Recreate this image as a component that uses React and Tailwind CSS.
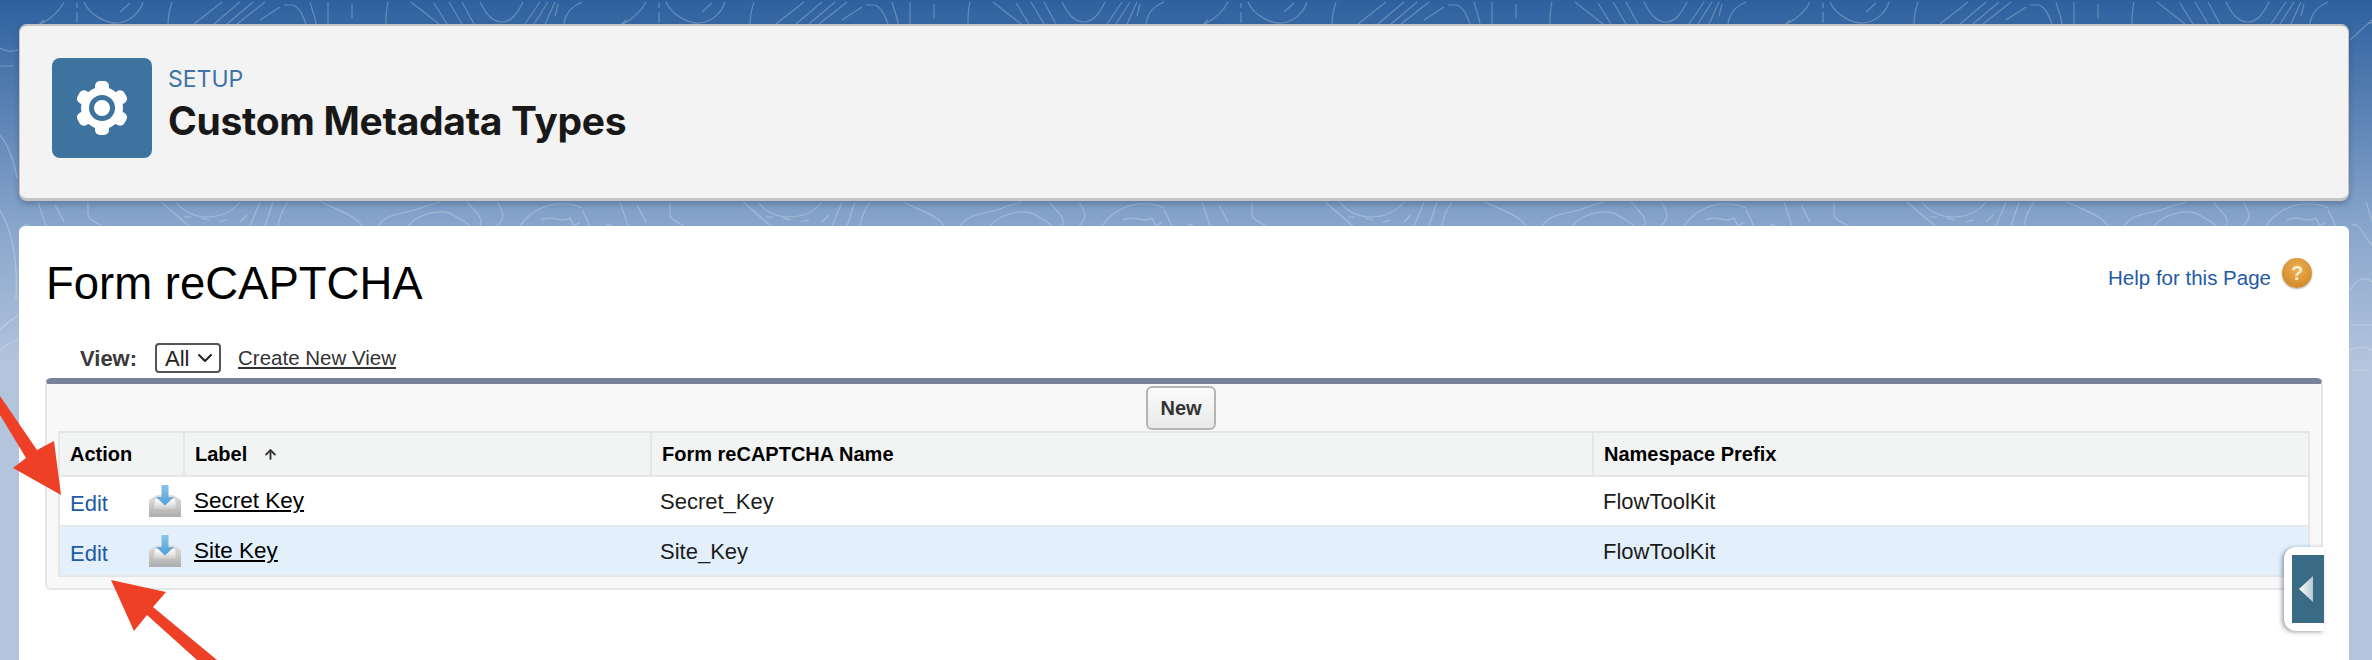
import { ArrowUp, ChevronDown } from 'lucide-react'

const rows = [
  { label: 'Secret Key', name: 'Secret_Key', prefix: 'FlowToolKit', bg: 'bg-white' },
  { label: 'Site Key', name: 'Site_Key', prefix: 'FlowToolKit', bg: 'bg-[#e3f0fc]' },
]

function ContourBackground() {
  return (
    <svg className="absolute inset-0" width="2372" height="660" aria-hidden="true">
      <defs>
        <pattern id="contours" width="582" height="660" patternUnits="userSpaceOnUse">
          <g fill="none" stroke="#ffffff" strokeOpacity="0.25" strokeWidth="1.2">
            {/* top band */}
            <path d="M41 24C52 18 60 10 64 2M77 3V8M77 12V23M84 2C90 16 108 24 118 23C130 22 140 12 143 2M120 12L130 3M168 24C168 14 170 8 172 2" />
            <path d="M194 24L222 2M214 24L240 2M227 24L253 2M237 24L265 2M260 20L280 7M284 5H293M293 5C300 8 303 16 306 24" />
            <path d="M310 2C312 10 315 16 316 24M328 2V24M352 4V18M388 2C386 10 386 16 386 24M411 2L439 24M434 3L447 24M449 2L462 24M462 2L474 24" />
            <path d="M480 2C486 14 492 22 502 22C512 22 518 12 523 2M525 24L540 2M534 24L548 2M545 24L555 2M555 16L558 4M564 24C565 14 572 6 582 2" />
            {/* band under the header */}
            <path d="M38 202L46 226M55 205L64 222M88 202V214C88 220 96 222 102 226M161 202L189 226M176 202C190 222 224 222 240 202" />
            <path d="M184 217H191M201 218L209 220M219 222L227 220M240 222L247 215M250 226L260 202M265 226L273 202M278 226C280 214 284 208 288 202" />
            <path d="M321 202C342 212 356 216 362 226M378 226C386 214 400 214 415 210C425 206 432 204 440 202M408 226C420 212 445 208 455 216C462 220 466 222 470 226" />
            <path d="M467 202C478 214 484 220 480 226M497 202C505 214 505 218 497 226M520 226C532 208 552 202 568 204C585 206 594 214 602 226" />
            <path d="M541 220C552 214 562 224 570 218L574 226L580 222" />
            {/* side strips */}
            <path d="M0 48C6 52 12 52 18 50M0 66H14M0 135C8 145 14 160 17 178M0 210C12 230 18 260 16 300M0 330C8 322 14 318 18 316M0 350C6 344 12 342 18 340" />
            <path d="M22 40L44 20M24 225C32 222 38 240 44 245M22 290C30 278 38 276 44 282M22 325H44M22 350C30 346 36 346 44 350M24 370H42" />
          </g>
        </pattern>
      </defs>
      <rect width="2372" height="660" fill="url(#contours)" />
    </svg>
  )
}

function GearIcon() {
  return (
    <svg width="56" height="56" viewBox="-28 -28 56 56" aria-hidden="true">
      <g fill="#ffffff">
        <circle r="21" />
        {[0, 60, 120, 180, 240, 300].map((angle) => (
          <rect key={angle} x="-7" y="-27" width="14" height="14" rx="5" transform={`rotate(${angle})`} />
        ))}
      </g>
      <circle r="10.5" fill="#ffffff" stroke="#3f739f" strokeWidth="5" />
    </svg>
  )
}

function DownloadIcon() {
  return (
    <svg width="32" height="32" viewBox="0 0 32 32" aria-hidden="true" className="shrink-0">
      <defs>
        <linearGradient id="tray" x1="0" y1="0" x2="0" y2="1">
          <stop offset="0" stopColor="#e2e2e2" />
          <stop offset="1" stopColor="#adadad" />
        </linearGradient>
        <linearGradient id="inner" x1="0" y1="0" x2="0" y2="1">
          <stop offset="0" stopColor="#ffffff" stopOpacity="0.95" />
          <stop offset="1" stopColor="#ffffff" stopOpacity="0.15" />
        </linearGradient>
        <linearGradient id="drop" x1="0" y1="0" x2="0" y2="1">
          <stop offset="0" stopColor="#8cc3e8" />
          <stop offset="1" stopColor="#4f9fd8" />
        </linearGradient>
      </defs>
      <path d="M0 15L8 10H24L32 15V32H0Z" fill="url(#tray)" />
      <path d="M6 14H26L27 24H5Z" fill="url(#inner)" />
      <path d="M12.5 0H19.5V12H25L16 20.5L7 12H12.5Z" fill="url(#drop)" />
    </svg>
  )
}

export default function App() {
  return (
    <div className="relative h-[660px] overflow-hidden bg-linear-to-b from-[#2d619e] via-[#85a3ca] via-[33%] to-[#b3c4dd] to-[55%] font-['Liberation_Sans',Arial,sans-serif]">
      <ContourBackground />

      <div className="relative flex flex-col pl-[19px] pr-[23px] pt-6">
        {/* Header */}
        <header className="flex h-[177px] gap-4 rounded-lg border-x border-t-2 border-b-[3px] border-[#c4c4c4] bg-[#f3f3f3] pl-8 pt-8 shadow-[0_3px_6px_rgba(40,60,90,0.35)]">
          <div className="flex h-[100px] w-[100px] items-center justify-center rounded-lg bg-[#3f739f]">
            <GearIcon />
          </div>
          <div className="font-['Inter',sans-serif]">
            <p className="mt-[7px] text-[23px] leading-7 text-[#3f73a8]">SETUP</p>
            <h1 className="mt-[5px] text-[39px] leading-[46px] font-bold tracking-[-0.3px] text-[#181818]">Custom Metadata Types</h1>
          </div>
        </header>

        {/* Main */}
        <main className="mt-[25px] h-[434px] rounded-t-md bg-white pl-[26px] pr-[26px]">
          <div className="flex items-start justify-between">
            <h2 className="pl-px pt-[31px] text-[45.5px] leading-[54px] text-black">Form reCAPTCHA</h2>
            <div className="flex items-start gap-[11px] pr-[11px] pt-[32px]">
              <a className="pt-[8px] text-[20.5px] leading-6 text-[#1f5aa3]">Help for this Page</a>
              <span className="flex h-[30px] w-[30px] items-center justify-center rounded-full bg-[radial-gradient(circle_at_50%_35%,#eeb150,#c97d20)] text-[20px] leading-none font-bold text-[#fbeacb] shadow-[0_1px_2px_rgba(0,0,0,0.35)]">?</span>
            </div>
          </div>

          <div className="mt-[32px] flex h-[30px] items-center pl-[35px]">
            <span className="w-[75px] text-[22px] font-bold text-[#3a3a3a]">View:</span>
            <div className="flex h-[30px] w-[66px] items-center justify-between rounded border-2 border-[#555555] pl-[8px] pr-[2px] text-[22px] text-[#222222]">
              All
              <ChevronDown size={24} strokeWidth={2} />
            </div>
            <a className="ml-[17px] text-[20.5px] text-[#333333] underline">Create New View</a>
          </div>

          {/* List panel */}
          <section className="relative mt-[5px] h-[212px] rounded-md border-x-2 border-b-2 border-t-[6px] border-x-[#e4e6e7] border-b-[#e4e6e7] border-t-[#7a8299] bg-[#f8f8f8] px-[11px]">
            <div className="flex h-[47px] justify-center pr-[6px] pt-[2px]">
              <button className="h-[44px] w-[70px] rounded-md border-2 border-[#b5b5b5] bg-linear-to-b from-[#fbfbfb] to-[#e9e9e9] text-[20px] font-bold text-[#333333]">New</button>
            </div>

            <table className="w-[2252px] table-fixed border-collapse border-x-2 border-[#e4e6e7] text-[22px] text-[#1c1c1c]">
              <thead>
                <tr className="h-[44px] border-y-2 border-[#e4e6e7] bg-[#f2f3f3] text-left text-[20px] font-bold text-black">
                  <th className="w-[125px] border-r-2 border-[#e4e6e7] pl-[10px]">Action</th>
                  <th className="w-[467px] border-r-2 border-[#e4e6e7] pl-[10px]">
                    <span className="flex items-center gap-[16px]">
                      Label
                      <ArrowUp size={15} strokeWidth={3} className="text-[#333333]" />
                    </span>
                  </th>
                  <th className="w-[942px] border-r-2 border-[#e4e6e7] pl-[10px]">Form reCAPTCHA Name</th>
                  <th className="pl-[10px]">Namespace Prefix</th>
                </tr>
              </thead>
              <tbody>
                {rows.map((row) => (
                  <tr key={row.name} className={`h-[50px] border-b-2 border-[#e4e6e7] ${row.bg}`}>
                    <td className="pl-[10px]">
                      <span className="flex items-center justify-between pr-[3px]">
                        <a className="pt-[4px] text-[#1f5aa3]">Edit</a>
                        <DownloadIcon />
                      </span>
                    </td>
                    <td className="pl-[10px]">
                      <a className="text-[22.5px] text-black underline">{row.label}</a>
                    </td>
                    <td className="pl-[9px]">{row.name}</td>
                    <td className="pl-[10px]">{row.prefix}</td>
                  </tr>
                ))}
              </tbody>
            </table>

            {/* Side tab */}
            <div className="absolute right-[-3px] top-[163px] h-[84px] w-[40px] rounded-l-xl bg-white py-[8px] pl-[8px] shadow-[-2px_1px_4px_rgba(60,70,90,0.5)]">
              <div className="flex h-[68px] items-center bg-[#3a6b85] pl-[7px]">
                <svg width="16" height="28" viewBox="0 0 16 28" aria-hidden="true">
                  <defs>
                    <linearGradient id="tab" x1="0" y1="0" x2="1" y2="0">
                      <stop offset="0" stopColor="#ffffff" />
                      <stop offset="1" stopColor="#b9c9d2" />
                    </linearGradient>
                  </defs>
                  <path d="M0 14L14 1V27Z" fill="url(#tab)" />
                </svg>
              </div>
            </div>
          </section>
        </main>
      </div>

      {/* Annotation arrows */}
      <svg className="absolute left-0 top-0" width="240" height="660" aria-hidden="true">
        <path d="M0 396L37 450L54 441L61 495L13 468L26 458L0 415Z" fill="#ee4026" />
        <path d="M111 580L166 592L153 607L217 660H197L147 615L134 631Z" fill="#ee4026" />
      </svg>
    </div>
  )
}
